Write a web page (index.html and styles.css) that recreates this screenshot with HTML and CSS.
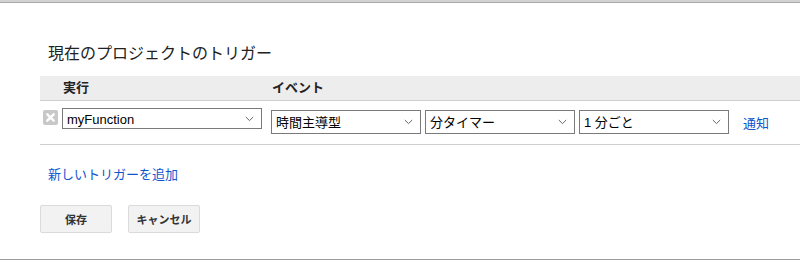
FILE: index.html
```html
<!DOCTYPE html>
<html lang="ja">
<head>
<meta charset="utf-8">
<link rel="stylesheet" href="styles.css">
</head>
<body>
<div class="page">
  <div class="topstrip"></div>
  <div class="panel">
    <h1 class="title">現在のプロジェクトのトリガー</h1>
    <div class="thead">
      <div class="th th-run">実行</div>
      <div class="th th-event">イベント</div>
    </div>
    <div class="trow">
      <span class="del" title="削除">
        <svg width="15" height="15" viewBox="0 0 15 15"><rect width="15" height="15" rx="2" fill="#c8c8c8"/><path d="M4.3 4.3 L10.7 10.7 M10.7 4.3 L4.3 10.7" stroke="#fff" stroke-width="2.4" stroke-linecap="round"/></svg>
      </span>
      <div class="sel sel-fn"><span class="sel-text">myFunction</span><svg class="chev" width="9" height="6" viewBox="0 0 9 6"><path d="M0.8 1 L4.5 4.6 L8.2 1" fill="none" stroke="#666" stroke-width="1"/></svg></div>
      <div class="sel sel-ev"><span class="sel-text">時間主導型</span><svg class="chev" width="9" height="6" viewBox="0 0 9 6"><path d="M0.8 1 L4.5 4.6 L8.2 1" fill="none" stroke="#666" stroke-width="1"/></svg></div>
      <div class="sel sel-ev"><span class="sel-text">分タイマー</span><svg class="chev" width="9" height="6" viewBox="0 0 9 6"><path d="M0.8 1 L4.5 4.6 L8.2 1" fill="none" stroke="#666" stroke-width="1"/></svg></div>
      <div class="sel sel-ev"><span class="sel-text">1 分ごと</span><svg class="chev" width="9" height="6" viewBox="0 0 9 6"><path d="M0.8 1 L4.5 4.6 L8.2 1" fill="none" stroke="#666" stroke-width="1"/></svg></div>
      <a class="link notify" href="#">通知</a>
    </div>
    <a class="link addlink" href="#">新しいトリガーを追加</a>
    <div class="buttons">
      <button class="btn">保存</button>
      <button class="btn">キャンセル</button>
    </div>
  </div>
</div>
</body>
</html>
```
FILE: styles.css
```css
html, body {
  margin: 0;
  padding: 0;
  background: #fff;
}
body {
  font-family: "Liberation Sans", "Noto Sans CJK JP", sans-serif;
  color: #222;
}
.page {
  height: 260px;
  box-sizing: border-box;
  border-bottom: 1px solid #9c9c9c;
  overflow: hidden;
}
.topstrip {
  height: 2px;
  background: #d2d2d2;
  border-bottom: 1px solid #a9a9a9;
}
.panel {
  padding-left: 40px;
}
.title {
  margin: 41px 0 0 8px;
  font-size: 16px;
  line-height: 20px;
  font-weight: normal;
  color: #222;
}
.thead {
  margin-top: 12px;
  display: flex;
  height: 24px;
  background: #ededed;
  border-bottom: 1px solid #cfcfcf;
  padding-left: 23px;
}
.th {
  font-size: 13px;
  font-weight: bold;
  line-height: 24px;
  color: #222;
}
.th-run { width: 209px; }
.trow {
  display: flex;
  align-items: flex-start;
  padding: 7px 0 10px 3px;
  border-bottom: 1px solid #cfcfcf;
}
.del {
  display: block;
  width: 15px;
  height: 15px;
  margin-top: 2px;
  margin-right: 4px;
}
.del svg { display: block; }
.sel {
  display: flex;
  align-items: center;
  box-sizing: border-box;
  border: 1px solid #7a7a7a;
  background: #fff;
  font-size: 13px;
  color: #000;
  padding: 0 7px 0 4px;
}
.sel-text {
  flex: 1;
  white-space: nowrap;
}
.chev { display: block; flex: none; }
.sel-fn {
  width: 200px;
  height: 21px;
  line-height: 19px;
  margin-right: 9px;
  padding-top: 1px;
}
.sel-ev {
  width: 150px;
  height: 24px;
  line-height: 22px;
  margin-top: 2px;
  margin-right: 4px;
}
.sel-ev .sel-text { padding-top: 2px; }
.link {
  color: #1155cc;
  text-decoration: none;
  font-size: 13px;
}
.notify {
  margin-left: 10px;
  margin-top: 6px;
  line-height: 20px;
}
.addlink {
  display: block;
  margin: 20px 0 0 8px;
  line-height: 20px;
}
.buttons {
  display: flex;
  gap: 16px;
  margin-top: 20px;
}
.btn {
  width: 72px;
  height: 28px;
  box-sizing: border-box;
  border: 1px solid #dadada;
  border-radius: 2px;
  background: #f2f2f2;
  color: #333;
  font-family: "Liberation Sans", "Noto Sans CJK JP", sans-serif;
  font-size: 11px;
  font-weight: bold;
  padding: 0;
  margin: 0;
}
```
